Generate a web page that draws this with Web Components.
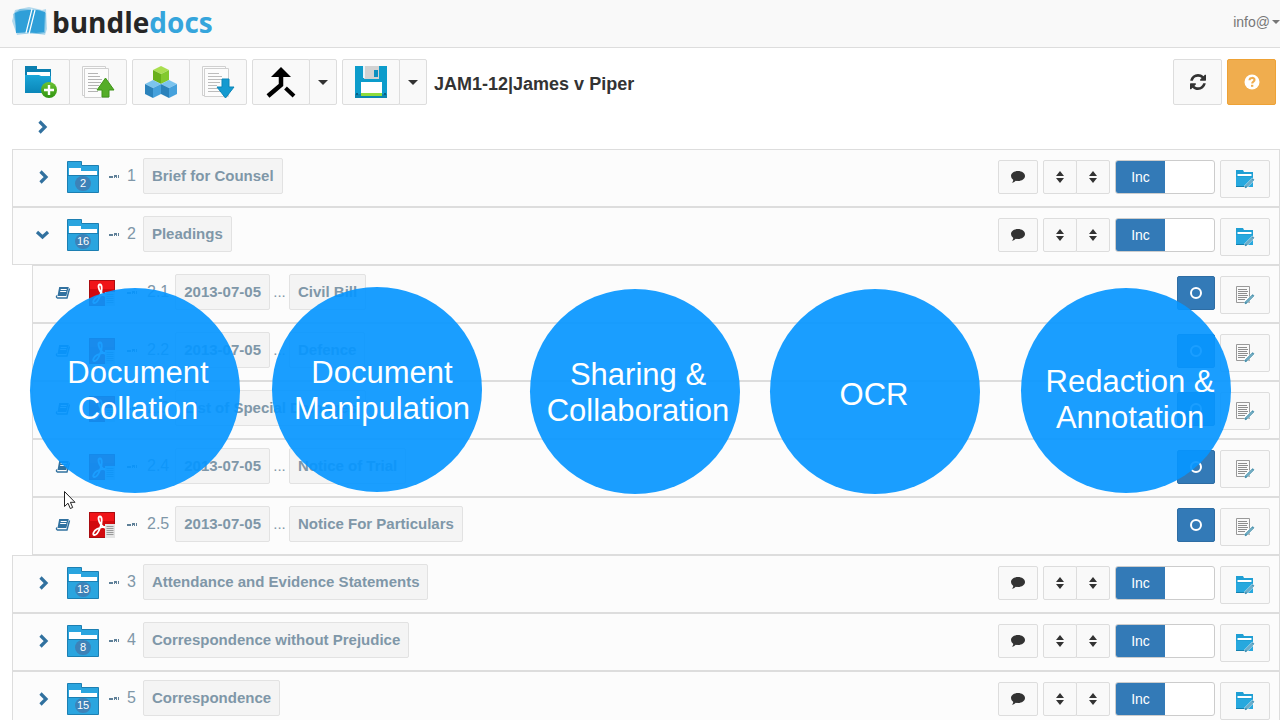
<!DOCTYPE html>
<html lang="en">
<head>
<meta charset="utf-8">
<title>Bundledocs</title>
<style>
  html { overflow: hidden; background: #fff; }
  body { margin: 0; font-family: "Liberation Sans", Arial, sans-serif; color: #333; }
</style>
</head>
<body>
<bundle-app>
  <app-header slot="header"></app-header>
  <app-toolbar slot="toolbar">JAM1-12|James v Piper</app-toolbar>

  <folder-row number="1" count="2">Brief for Counsel</folder-row>
  <folder-row number="2" count="16" open>Pleadings</folder-row>
  <doc-row number="2.1" date="2013-07-05">Civil Bill</doc-row>
  <doc-row number="2.2" date="2013-07-05">Defence</doc-row>
  <doc-row number="2.3">List of Special Damages</doc-row>
  <doc-row number="2.4" date="2013-07-05">Notice of Trial</doc-row>
  <doc-row number="2.5" date="2013-07-05">Notice For Particulars</doc-row>
  <folder-row number="3" count="13">Attendance and Evidence Statements</folder-row>
  <folder-row number="4" count="8">Correspondence without Prejudice</folder-row>
  <folder-row number="5" count="15">Correspondence</folder-row>

  <feature-bubble slot="overlay" x="30" y="288" label-x="138" label-y="391">Document<br>Collation</feature-bubble>
  <feature-bubble slot="overlay" x="272" y="287" label-x="382" label-y="391">Document<br>Manipulation</feature-bubble>
  <feature-bubble slot="overlay" x="530" y="289" label-x="638" label-y="393">Sharing &amp;<br>Collaboration</feature-bubble>
  <feature-bubble slot="overlay" x="770" y="289" label-x="874" label-y="395">OCR</feature-bubble>
  <feature-bubble slot="overlay" x="1021" y="288" label-x="1130" label-y="400">Redaction &amp;<br>Annotation</feature-bubble>
  <mouse-pointer slot="overlay" x="63" y="490"></mouse-pointer>
</bundle-app>

<script>
const ICONS = {
  logo: ['0 0 36 30', `
    <g fill="#2f9fd8"><path opacity=".35" d="M3 3 17 0 30 3 34 2 35 22 33 28 20 26 5 28 0 14z"/>
    <path opacity=".45" d="M1 7 8 2 28 3 34 6 33 26 28 27 6 26z"/>
    <path d="M3 6 8 4 16 3 25 3 33 5 32 25 24 26 14 25 4 26z"/></g>
    <path d="M20 2 14 26M23 3 17 27" stroke="#fff" stroke-width="1.200"/>`],
  folderAdd: ['0 0 34 34', `
    <defs><linearGradient id="a" x2="0" y2="1"><stop stop-color="#1ba6d8"/><stop offset="1" stop-color="#0a86b8"/></linearGradient>
    <linearGradient id="b" x2="0" y2="1"><stop stop-color="#6cc233"/><stop offset="1" stop-color="#2f9410"/></linearGradient></defs>
    <path d="M1 1h12v3h14v9H1z" fill="#0b7fb0"/><path d="M3 7h23v5H3z" fill="#fff"/>
    <path d="M1 10h14l2 1h10v17H1z" fill="url(#a)"/>
    <circle cx="25" cy="25" r="8" fill="url(#b)"/><path d="M25 20v10M20 25h10" stroke="#fff" stroke-width="2.400"/>`],
  pagesUp: ['0 0 34 34', `
    <g stroke="#d0d0d0" fill="#fcfcfc"><path d="M1.500 1.500h23v29h-23z"/><path d="M3.500 3.500h24v29h-24z"/></g>
    <path d="M7 8.500h10M7 11.500h12M7 14.500h14M7 17.500h13M7 20.500h11M7 23.500h9M7 26.500h10" stroke="#b4b4b4"/>
    <path d="M24.500 13 33 25h-5v7h-7v-7h-5z" fill="#55ad28" stroke="#3f9418"/>`],
  cubes: ['0 0 34 34', `
    <path d="M17 1 25 5 17 9 9 5z" fill="#a9de4f"/><path d="M9 5 17 9v10L9 15z" fill="#69b01c"/><path d="M25 5 17 9v10l8-4z" fill="#83c92d"/>
    <path d="M9 15 17 19 9 23 1 19z" fill="#7cc4ee"/><path d="M1 19 9 23v10L1 29z" fill="#2b82bb"/><path d="M17 19 9 23v10l8-4z" fill="#46a1dc"/>
    <path d="M25 15 33 19 25 23 17 19z" fill="#7cc4ee"/><path d="M17 19 25 23v10l-8-4z" fill="#2b82bb"/><path d="M33 19 25 23v10l8-4z" fill="#46a1dc"/>`],
  pagesDown: ['0 0 34 34', `
    <g stroke="#d0d0d0" fill="#fcfcfc"><path d="M1.500 1.500h23v29h-23z"/><path d="M3.500 3.500h24v28h-24z"/></g>
    <path d="M7 8.500h11M7 11.500h14M7 14.500h14M7 17.500h12M7 20.500h9M7 23.500h10M7 26.500h12" stroke="#bcbcbc"/>
    <path d="M21 14h7v8h5L24.500 33 16 22h5z" fill="#149ad0" stroke="#0b86b8"/>`],
  merge: ['0 0 34 34', `
    <path d="M17 2 27 12H7z" fill="#000"/><path d="M17 11v9L4 31" fill="none" stroke="#000" stroke-width="4.500"/><path d="M21.500 23 30 31" stroke="#000" stroke-width="4"/>`],
  save: ['0 0 34 34', `
    <path d="M1 1h32v32H1z" fill="#0c9ccb"/><path d="M1 29h32v4H1z" fill="#0a86b0"/><path d="M10 1h15v13H10z" fill="#d2d2d2"/><path d="M9 1h2v12H9z" fill="#e8f4f9"/><path d="M20 5h4v7h-4z" fill="#0c8fc0"/>
    <path d="M7 17h21v14H7z" fill="#fff"/><path d="M7 28h21v3H7z" fill="#8ddc3c"/><path d="M2 28h2v2H2zM30 28h2v2h-2z" fill="#075f86"/>`],
  caret: ['0 0 10 5', `<path d="M0 0h10L5 5z" fill="currentColor"/>`],
  refresh: ['0 0 1536 1536', `<path fill="currentColor" d="M1511 928q0 5-1 7-64 268-268 434.500T764 1536q-146 0-282.500-55T238 1324l-129 129q-19 19-45 19t-45-19-19-45V960q0-26 19-45t45-19h448q26 0 45 19t19 45-19 45l-137 137q71 66 161 102t187 36q134 0 250-65t186-179q11-17 53-117 8-23 30-23h192q13 0 22.500 9.500t9.500 22.500zm25-800v448q0 26-19 45t-45 19h-448q-26 0-45-19t-19-45 19-45l138-138Q969 256 768 256q-134 0-250 65T332 500q-11 17-53 117-8 23-30 23H50q-13 0-22.500-9.500T18 608v-7q65-268 270-434.500T768 0q146 0 284 55.500T1297 212l130-129q19-19 45-19t45 19 19 45z"/>`],
  help: ['0 0 16 16', `<circle cx="8" cy="8" r="7.500" fill="#fff"/><path d="M5.500 6.200C5.600 3.200 10.600 3.200 10.500 6c0 1.700-2.300 1.600-2.300 3.400" fill="none" stroke="#f0ad4e" stroke-width="2.100"/><path d="M7 10.800h2.300v2H7z" fill="#f0ad4e"/>`],
  right: ['0 0 16 16', `<path d="M5.500 2.500 11 8l-5.500 5.500" fill="none" stroke="#31719f" stroke-width="3.200"/>`],
  down: ['0 0 16 16', `<path d="M2 5 7.500 10 13 5" fill="none" stroke="#31719f" stroke-width="3.200"/>`],
  folder: ['0 0 32 32', `
    <path d="M.5.500h14v4h17v27H.500z" fill="#2aa5df" stroke="#1c7fb2"/><path d="M2 7h12v3h16v4H2z" fill="#fff"/>
    <path d="M1 14.500h30" stroke="#1c7fb2"/>`],
  grip: ['0 0 10 4', `<path d="M0 1h4v2H0zM5 0h3v2H6v1H5zM7 1h1v2H7zM9 0h1v3H9z" fill="#5f8098"/>`],
  book: ['0 0 16 14', `<path d="M4.200 1h9.600l-2.500 9H2.500z" fill="#31719f"/><path d="M5.700 3.500h6M5.200 5.500h6" stroke="#fff"/><path d="M14.500 2.500 12 12H2.500Q.8 11.500 1.800 9.500" fill="none" stroke="#31719f" stroke-width="1.400"/>`],
  pdf: ['0 0 26 26', `
    <path d="M0 0h26v26H0z" fill="#d20a0e"/><path d="M0 0h26v9H0z" fill="#f01418"/><path d="M.5.500h25v25H.500z" fill="none" stroke="#a80c10"/>
    <path d="M11.500 14.500C10 19 7.500 23 5.500 23c-2.500 0-1-4 2.500-6 3-1.500 8-2.500 11-1.500M11.500 14.500C13 11 13.500 4.500 11 4.500c-2.500 0-1.500 4.500.5 7.500 1.500 2 4 4 6.500 4.500" fill="none" stroke="#fff" stroke-width="1.800"/>
    <path d="M16 12h10v14H16z" fill="#e4e4e4"/><path d="M17.500 14.500h7M17.500 16.500h7M17.500 18.500h7M17.500 20.500h7M17.500 22.500h7" stroke="#999"/>`],
  comment: ['0 0 16 14', `<path d="M8 1c4 0 7 2.200 7 5s-3 5-7 5q-1.200 0-2.200-.2Q4 12.600 1.800 12.800 3.200 11.500 3.300 10 1 8.500 1 6c0-2.800 3-5 7-5z" fill="#333"/>`],
  sort: ['0 0 10 14', `<path d="M5 1 9 6H1zM1 8h8l-4 5z" fill="#333"/>`],
  folderEdit: ['0 0 20 20', `
    <path d="M1 1h7l1 2h9v15H1z" fill="#1f9fd4"/><path d="M2.500 5h14v2h-14z" fill="#fff"/><path d="M1 8h17v10H1z" fill="#27a8de"/><path d="M1 17.500h10" stroke="#1280ae"/>
    <path d="M10 18.500 18.500 10" stroke="#fff" stroke-width="3.200"/><path d="M10 18.500 18.500 10" stroke="#2682ab" stroke-width="2.400"/><path d="M11 17.500 18 10.500" stroke="#d4edf7" stroke-width=".8"/>`],
  pageEdit: ['0 0 20 20', `
    <path d="M1.500 1.500h13v16h-13z" fill="#fafafa" stroke="#999"/><path d="M3 4.500h9M3 6.500h10M3 8.500h9M3 10.500h10M3 12.500h9M3 14.500h7" stroke="#8d8d8d"/>
    <path d="M10 18.500 18.500 10" stroke="#fff" stroke-width="3.200"/><path d="M10 18.500 18.500 10" stroke="#2f809f" stroke-width="2.400"/><path d="M11 17.500 18 10.500" stroke="#d4edf7" stroke-width=".8"/>`],
  ring: ['0 0 14 14', `<circle cx="7" cy="7" r="5" fill="none" stroke="#fff" stroke-width="2"/>`],
  pointer: ['0 0 13 20', `<path d="M1.500 1.500v15l3.500-3.300 2.300 5.300 2.400-1-2.300-5.200h4.600z" fill="#fff" stroke="#222"/>`]
};
const icon = (name, w, h) => `<svg width="${w}" height="${h}" viewBox="${ICONS[name][0]}" aria-hidden="true">${ICONS[name][1]}</svg>`;

const BASE = `
  *, *::before { box-sizing: border-box; }
  svg { display: block; flex: none; }
  button { display: flex; align-items: center; justify-content: center; flex: none; margin: 0; padding: 0;
    border: 1px solid #ddd; border-radius: 2px; background: #f9f9f9; color: #333; font: inherit; }
  button.plain { border: 0; background: none; }
  .group { display: flex; }
  .group button + button { margin-left: -1px; border-top-left-radius: 0; border-bottom-left-radius: 0; }
`;
class Base extends HTMLElement {
  connectedCallback() {
    if (!this.shadowRoot) this.attachShadow({ mode: 'open' }).innerHTML = `<style>${BASE}${this.css()}</style>${this.html()}`;
  }
  attr(name) { return this.getAttribute(name) || ''; }
}

customElements.define('bundle-app', class extends Base {
  css() { return `
    :host { display: block; position: relative; }
    nav { display: flex; align-items: center; height: 44px; padding-left: 34px; }
    main { display: block; padding-left: 12px; }`; }
  html() { return `
    <slot name="header"></slot><slot name="toolbar"></slot>
    <nav><button class="plain" aria-label="Expand all">${icon('right', 16, 16)}</button></nav>
    <main><slot></slot></main><slot name="overlay"></slot>`; }
});

customElements.define('app-header', class extends Base {
  css() { return `
    :host { display: flex; justify-content: space-between; height: 48px; border-bottom: 1px solid #ddd; background: #f9f9f9; overflow: hidden; box-sizing: border-box; }
    a { display: flex; align-items: center; height: 44px; text-decoration: none; }
    .brand { gap: 4px; padding-left: 12px; font: 700 28px/44px "Open Sans", sans-serif; color: #262626; }
    .brand b { color: #35a5dc; font-weight: 700; }
    .user { gap: 2px; font-size: 14px; color: #777; }`; }
  html() { return `
    <a class="brand" href="#">${icon('logo', 36, 30)}<span>bundle<b>docs</b></span></a>
    <a class="user" href="#">info@ ${icon('caret', 8, 4)}</a>`; }
});

customElements.define('app-toolbar', class extends Base {
  css() { return `
    :host { display: flex; align-items: center; gap: 5px; padding: 11px 4px 0 12px; }
    button { width: 58px; height: 46px; }
    button.caret { width: 28px; }
    h1 { flex: 1; margin: 0; padding: 4px 0 0 2px; font-size: 18px; line-height: 42px; color: #333; }
    button.square { width: 49px; }
    button.help { background: #f0ad4e; border-color: #eea236; }`; }
  html() { return `
    <div class="group"><button aria-label="Add section">${icon('folderAdd', 34, 34)}</button><button aria-label="Upload">${icon('pagesUp', 34, 34)}</button></div>
    <div class="group"><button aria-label="Build">${icon('cubes', 34, 34)}</button><button aria-label="Download">${icon('pagesDown', 34, 34)}</button></div>
    <div class="group"><button aria-label="Merge">${icon('merge', 34, 34)}</button><button class="caret" aria-label="Merge options">${icon('caret', 10, 5)}</button></div>
    <div class="group"><button aria-label="Save">${icon('save', 34, 34)}</button><button class="caret" aria-label="Save options">${icon('caret', 10, 5)}</button></div>
    <h1><slot></slot></h1>
    <button class="square" aria-label="Refresh">${icon('refresh', 16, 16)}</button>
    <button class="square help" aria-label="Help">${icon('help', 16, 16)}</button>`; }
});

const ROW = `
  :host { display: flex; justify-content: space-between; align-items: flex-start; height: 58px; box-sizing: border-box;
    padding: 8px 9px 0 22px; border: 1px solid #ddd; background: #fcfcfc; }
  .lead { display: flex; align-items: center; height: 38px; color: #7f97a8; }
  .num { align-self: flex-start; font-size: 16px; line-height: 36px; }
  .chip { align-self: flex-start; height: 36px; padding: 0 8px 2px; background: #f4f4f4; border-color: #e2e2e2;
    color: #7f97a8; font-size: 15px; font-weight: 700; white-space: nowrap; }
  .tools { display: flex; align-items: flex-start; gap: 5px; padding-top: 2px; }
  .tools button { height: 34px; }
  .tools button.edit { width: 50px; height: 38px; }
`;
customElements.define('folder-row', class extends Base {
  css() { return ROW + `
    .folder { position: relative; width: 32px; height: 32px; margin: 0 10px 0 16px; }
    .count { position: absolute; left: 8px; bottom: 2px; width: 16px; height: 15px; border-radius: 8px; background: #3d82b8;
      color: #fff; font-size: 11px; line-height: 15px; text-align: center; }
    .num { margin: 0 7px 0 8px; }
    .comment { width: 40px; } .sort { width: 34px; }
    label { display: flex; width: 100px; height: 34px; border: 1px solid #ccc; border-radius: 3px; background: #fff; overflow: hidden; position: relative; }
    label input { position: absolute; opacity: 0; margin: 0; }
    label span { width: 49px; background: #337ab7; color: #fff; font-size: 14px; line-height: 32px; text-align: center; }`; }
  html() { const open = this.hasAttribute('open'); return `
    <div class="lead">
      <button class="plain" aria-expanded="${open}" aria-label="Toggle section">${icon(open ? 'down' : 'right', 16, 16)}</button>
      <div class="folder">${icon('folder', 32, 32)}<span class="count">${this.attr('count')}</span></div>
      ${icon('grip', 10, 4)}<span class="num">${this.attr('number')}</span>
      <button class="chip"><slot></slot></button>
    </div>
    <div class="tools">
      <button class="comment" aria-label="Comment">${icon('comment', 16, 14)}</button>
      <div class="group"><button class="sort" aria-label="Sort by date">${icon('sort', 10, 14)}</button><button class="sort" aria-label="Sort by name">${icon('sort', 10, 14)}</button></div>
      <label><input type="checkbox" checked><span>Inc</span></label>
      <button class="edit" aria-label="Edit section">${icon('folderEdit', 20, 20)}</button>
    </div>`; }
});

customElements.define('doc-row', class extends Base {
  css() { return ROW + `
    :host { margin-left: 20px; }
    .pdf { margin: 0 12px 0 18px; }
    .num { margin: 0 6px 0 10px; }
    .dots { width: 19px; align-self: flex-start; text-align: center; font-size: 15px; line-height: 36px; }
    .mark { width: 38px; background: #337ab7; border-color: #2e6da4; }`; }
  html() { const date = this.attr('date'); return `
    <div class="lead">
      ${icon('book', 16, 14)}<div class="pdf">${icon('pdf', 26, 26)}</div>
      ${icon('grip', 10, 4)}<span class="num">${this.attr('number')}</span>
      ${date ? `<button class="chip">${date}</button><span class="dots">...</span>` : ''}
      <button class="chip"><slot></slot></button>
    </div>
    <div class="tools">
      <button class="mark" aria-label="Include">${icon('ring', 14, 14)}</button>
      <button class="edit" aria-label="Edit document">${icon('pageEdit', 20, 20)}</button>
    </div>`; }
});

customElements.define('feature-bubble', class extends Base {
  css() { return `
    :host { display: block; }
    .disc { position: absolute; left: ${this.attr('x')}px; top: ${this.attr('y')}px; width: 210px; height: 205px; border-radius: 50%; background: rgba(6, 150, 255, .92); }
    .label { position: absolute; left: ${this.attr('label-x')}px; top: ${this.attr('label-y')}px; transform: translate(-50%, -50%);
      color: #fff; font-size: 31px; line-height: 36px; text-align: center; white-space: nowrap; }`; }
  html() { return `<div class="disc"></div><div class="label"><slot></slot></div>`; }
});

customElements.define('mouse-pointer', class extends Base {
  css() { return `:host { position: absolute; left: ${this.attr('x')}px; top: ${this.attr('y')}px; }`; }
  html() { return icon('pointer', 13, 20); }
});
</script>
</body>
</html>
